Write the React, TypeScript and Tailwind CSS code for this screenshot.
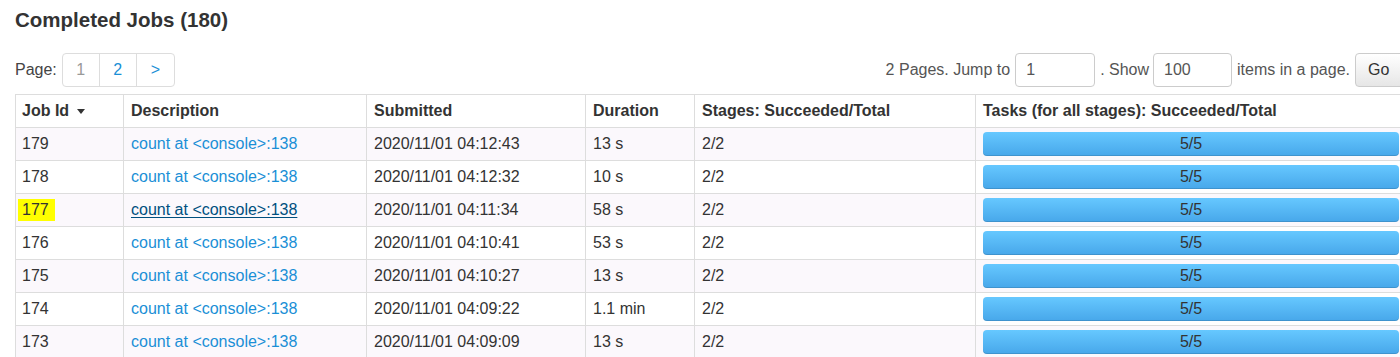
import React from "react";

type Job = { id: number; submitted: string; duration: string };

const jobs: Job[] = [
  { id: 179, submitted: "2020/11/01 04:12:43", duration: "13 s" },
  { id: 178, submitted: "2020/11/01 04:12:32", duration: "10 s" },
  { id: 177, submitted: "2020/11/01 04:11:34", duration: "58 s" },
  { id: 176, submitted: "2020/11/01 04:10:41", duration: "53 s" },
  { id: 175, submitted: "2020/11/01 04:10:27", duration: "13 s" },
  { id: 174, submitted: "2020/11/01 04:09:22", duration: "1.1 min" },
  { id: 173, submitted: "2020/11/01 04:09:09", duration: "13 s" },
];

const font = { fontFamily: '"Liberation Sans", Arial, sans-serif' };

function ProgressBar() {
  return (
    <div className="h-[24px] w-full rounded-[4px] bg-gradient-to-b from-[#66c8ff] to-[#47a7ea] shadow-[inset_0_-1px_0_rgba(0,0,0,0.12)] flex items-center justify-center text-[#333] text-[16px]">
      5/5
    </div>
  );
}

export default function App() {
  return (
    <div className="w-[1400px] h-[357px] overflow-hidden bg-white text-[#333]" style={font}>
      <div className="pl-[15px] w-[1410px]">
        <h4 className="pt-[8px] text-[20.5px] font-bold leading-[24px] text-[#333]">
          Completed Jobs (180)
        </h4>

        <div className="mt-[21px] flex items-center justify-between h-[34px] text-[16px]">
          <div className="flex items-center">
            <span className="text-[#444]">Page:</span>
            <div className="ml-[5px] flex h-[34px] rounded-[4px] border border-[#ddd]">
              <span className="w-[37px] flex items-center justify-center text-[#999] border-r border-[#ddd]">1</span>
              <span className="w-[37px] flex items-center justify-center text-[#1a8fd6] border-r border-[#ddd]">2</span>
              <span className="w-[37px] flex items-center justify-center text-[#1a8fd6]">&gt;</span>
            </div>
          </div>
          <div className="flex items-center text-[#555]">
            <span>2 Pages. Jump to</span>
            <div className="ml-[5px] w-[80px] h-[34px] rounded-[4px] border border-[#ccc] flex items-center pl-[10px] text-[#555]">1</div>
            <span className="ml-[5px]">. Show</span>
            <div className="ml-[4px] w-[79px] h-[34px] rounded-[4px] border border-[#ccc] flex items-center pl-[10px] text-[#555]">100</div>
            <span className="ml-[5px]">items in a page.</span>
            <div className="ml-[5px] w-[55px] h-[34px] rounded-[4px] border border-[#ccc] bg-gradient-to-b from-white to-[#e6e6e6] flex items-center pl-[12px] text-[#333]">Go</div>
          </div>
        </div>

        <table className="mt-[7px] w-[1392px] border-collapse border border-[#ddd] text-[16px] table-fixed">
          <colgroup>
            <col className="w-[108px]" />
            <col className="w-[243px]" />
            <col className="w-[219px]" />
            <col className="w-[109px]" />
            <col className="w-[281px]" />
            <col />
          </colgroup>
          <thead>
            <tr className="h-[33px]">
              <th className="border border-[#ddd] px-[6px] text-left font-bold">
                <span className="inline-flex items-center">
                  Job Id
                  <svg className="ml-[8px]" width="8" height="5" viewBox="0 0 8 5">
                    <path d="M0 0 L8 0 L4 5 Z" fill="#333" />
                  </svg>
                </span>
              </th>
              <th className="border border-[#ddd] px-[7px] text-left font-bold">Description</th>
              <th className="border border-[#ddd] px-[7px] text-left font-bold">Submitted</th>
              <th className="border border-[#ddd] px-[7px] text-left font-bold">Duration</th>
              <th className="border border-[#ddd] px-[7px] text-left font-bold">Stages: Succeeded/Total</th>
              <th className="border border-[#ddd] px-[7px] text-left font-bold">Tasks (for all stages): Succeeded/Total</th>
            </tr>
          </thead>
          <tbody>
            {jobs.map((job, i) => (
              <tr key={job.id} className={`h-[33px] ${i % 2 === 0 ? "bg-[#fbf8fc]" : "bg-white"}`}>
                <td className="border border-[#ddd] px-[6px]">
                  {job.id === 177 ? (
                    <span className="bg-[#ffff00] ml-[-4px] inline-block leading-[22px] pl-[4px] pr-[6px]">177</span>
                  ) : (
                    job.id
                  )}
                </td>
                <td className="border border-[#ddd] px-[7px]">
                  {job.id === 177 ? (
                    <span className="text-[#00507f] underline underline-offset-2">count at &lt;console&gt;:138</span>
                  ) : (
                    <span className="text-[#1a8fd6]">count at &lt;console&gt;:138</span>
                  )}
                </td>
                <td className="border border-[#ddd] px-[7px]">{job.submitted}</td>
                <td className="border border-[#ddd] px-[7px]">{job.duration}</td>
                <td className="border border-[#ddd] px-[7px]">2/2</td>
                <td className="border border-[#ddd] px-[7px]">
                  <ProgressBar />
                </td>
              </tr>
            ))}
          </tbody>
        </table>
      </div>
    </div>
  );
}
